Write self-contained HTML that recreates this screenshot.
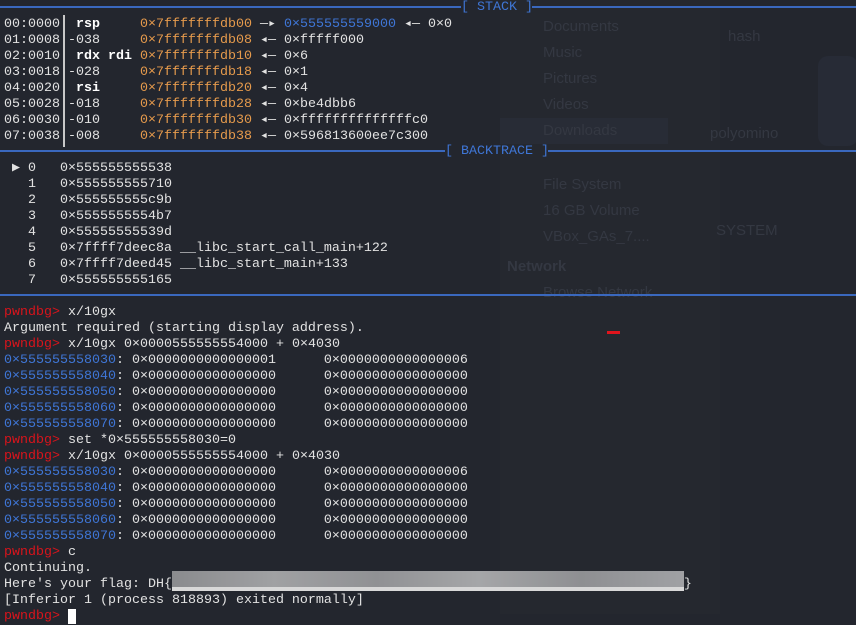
<!DOCTYPE html>
<html><head><meta charset="utf-8"><style>
html,body{margin:0;padding:0;width:856px;height:614px;overflow:hidden;background:#23262e;}
.bg{position:absolute;left:0;top:0;width:856px;height:614px;}
pre{position:absolute;left:4px;top:1px;margin:0;font-family:"Liberation Mono","DejaVu Sans Mono",monospace;font-size:13.33px;line-height:16px;color:#e2e2e2;}
.o{color:#e59a4c}.b{color:#3f76d6}.r{color:#d8141c}.w{font-weight:bold;color:#fff}
.hl{position:absolute;height:2px;background:#3a68be;}
.lab{position:absolute;font-family:"Liberation Mono",monospace;font-size:13.33px;color:#3f76d6;line-height:16px;}
.vb{position:absolute;left:63px;top:15px;width:2px;height:132px;background:#c8c8c8;}
.desk{position:absolute;font-family:"Liberation Sans",sans-serif;font-size:15px;color:#343842;}
</style></head><body>
<div class="bg">
<div style="position:absolute;left:500px;top:0;width:220px;height:614px;background:#25282f"></div>
<div style="position:absolute;left:500px;top:118px;width:168px;height:26px;background:#282c36"></div>
<div class="desk" style="left:543px;top:18px">Documents</div>
<div class="desk" style="left:543px;top:44px">Music</div>
<div class="desk" style="left:543px;top:70px">Pictures</div>
<div class="desk" style="left:543px;top:96px">Videos</div>
<div class="desk" style="left:543px;top:122px">Downloads</div>
<div class="desk" style="left:543px;top:176px">File System</div>
<div class="desk" style="left:543px;top:202px">16 GB Volume</div>
<div class="desk" style="left:543px;top:228px">VBox_GAs_7....</div>
<div class="desk" style="left:507px;top:258px;font-weight:bold">Network</div>
<div class="desk" style="left:543px;top:284px">Browse Network</div>
<div class="desk" style="left:728px;top:28px">hash</div>
<div class="desk" style="left:710px;top:125px">polyomino</div>
<div class="desk" style="left:716px;top:222px">SYSTEM</div>
<div style="position:absolute;left:818px;top:56px;width:40px;height:90px;background:#272b36;border-radius:10px"></div>
</div>
<div class="hl" style="left:0;top:6px;width:461px"></div>
<div class="hl" style="left:532px;top:6px;width:324px"></div>
<div class="lab" style="left:461px;top:0px">[ STACK ]</div>
<div class="hl" style="left:0;top:150px;width:445px"></div>
<div class="hl" style="left:548px;top:150px;width:308px"></div>
<div class="lab" style="left:445px;top:144px">[ BACKTRACE ]</div>
<div class="hl" style="left:0;top:294px;width:856px"></div>
<div class="vb"></div>
<div style="position:absolute;left:607px;top:331px;width:13px;height:3px;background:#e0141c"></div>
<div style="position:absolute;left:172px;top:571px;width:512px;height:20px;background:linear-gradient(90deg,#8a8b8e,#a0a1a3 20%,#909194 40%,#a5a6a8 60%,#8e8f92 80%,#a0a1a4);"></div>
<div style="position:absolute;left:172px;top:587px;width:512px;height:4px;background:#d8d8d8"></div>
<pre>

00:0000  <span class="w">rsp</span>     <span class="o">0×7fffffffdb00</span> —▸ <span class="b">0×555555559000</span> ◂— 0×0
01:0008 -038     <span class="o">0×7fffffffdb08</span> ◂— 0×fffff000
02:0010  <span class="w">rdx rdi</span> <span class="o">0×7fffffffdb10</span> ◂— 0×6
03:0018 -028     <span class="o">0×7fffffffdb18</span> ◂— 0×1
04:0020  <span class="w">rsi</span>     <span class="o">0×7fffffffdb20</span> ◂— 0×4
05:0028 -018     <span class="o">0×7fffffffdb28</span> ◂— 0×be4dbb6
06:0030 -010     <span class="o">0×7fffffffdb30</span> ◂— 0×ffffffffffffffc0
07:0038 -008     <span class="o">0×7fffffffdb38</span> ◂— 0×596813600ee7c300

 ▶ 0   0×555555555538
   1   0×555555555710
   2   0×555555555c9b
   3   0×5555555554b7
   4   0×55555555539d
   5   0×7ffff7deec8a __libc_start_call_main+122
   6   0×7ffff7deed45 __libc_start_main+133
   7   0×555555555165

<span class="r">pwndbg&gt;</span> x/10gx
Argument required (starting display address).
<span class="r">pwndbg&gt;</span> x/10gx 0×0000555555554000 + 0×4030
<span class="b">0×555555558030</span>: 0×0000000000000001      0×0000000000000006
<span class="b">0×555555558040</span>: 0×0000000000000000      0×0000000000000000
<span class="b">0×555555558050</span>: 0×0000000000000000      0×0000000000000000
<span class="b">0×555555558060</span>: 0×0000000000000000      0×0000000000000000
<span class="b">0×555555558070</span>: 0×0000000000000000      0×0000000000000000
<span class="r">pwndbg&gt;</span> set *0×555555558030=0
<span class="r">pwndbg&gt;</span> x/10gx 0×0000555555554000 + 0×4030
<span class="b">0×555555558030</span>: 0×0000000000000000      0×0000000000000006
<span class="b">0×555555558040</span>: 0×0000000000000000      0×0000000000000000
<span class="b">0×555555558050</span>: 0×0000000000000000      0×0000000000000000
<span class="b">0×555555558060</span>: 0×0000000000000000      0×0000000000000000
<span class="b">0×555555558070</span>: 0×0000000000000000      0×0000000000000000
<span class="r">pwndbg&gt;</span> c
Continuing.
Here's your flag: DH{                                                                }
[Inferior 1 (process 818893) exited normally]
<span class="r">pwndbg&gt;</span> <span style="background:#fff">&nbsp;</span>
</pre>
</body></html>
